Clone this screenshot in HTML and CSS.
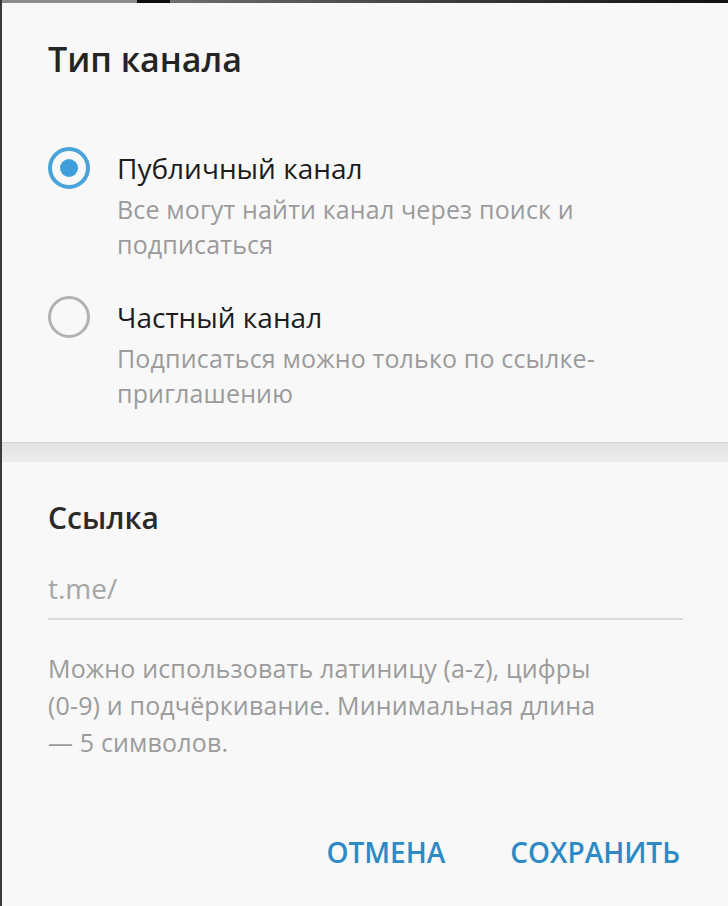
FILE: index.html
```html
<!DOCTYPE html>
<html lang="ru">
<head>
<meta charset="utf-8">
<link rel="stylesheet" href="styles.css">
</head>
<body>
<div class="topstrip"><span class="ts-a"></span><span class="ts-b"></span><span class="ts-c"></span></div>
<div class="dialog">
  <section class="type">
    <h1 class="title">Тип канала</h1>
    <div class="option first">
      <span class="radio checked"><span class="dot"></span></span>
      <div class="opt-text">
        <div class="opt-label">Публичный канал</div>
        <div class="opt-desc">Все могут найти канал через поиск и подписаться</div>
      </div>
    </div>
    <div class="option second">
      <span class="radio"></span>
      <div class="opt-text">
        <div class="opt-label">Частный канал</div>
        <div class="opt-desc">Подписаться можно только по ссылке-приглашению</div>
      </div>
    </div>
  </section>
  <div class="divider"></div>
  <section class="link">
    <h2 class="subtitle">Ссылка</h2>
    <div class="field"><span class="placeholder">t.me/</span></div>
    <p class="hint">Можно использовать латиницу (a-z), цифры <span class="nowrap">(0-9)</span> и подчёркивание. Минимальная длина <span class="nowrap">— 5</span> символов.</p>
    <div class="buttons">
      <span class="btn">ОТМЕНА</span>
      <span class="btn">СОХРАНИТЬ</span>
    </div>
  </section>
</div>
</body>
</html>
```
FILE: styles.css
```css
html, body {
  margin: 0;
  padding: 0;
  background: #f8f8f8;
  font-family: "Open Sans", "Noto Sans", sans-serif;
}
body {
  width: 728px;
  height: 906px;
  overflow: hidden;
  border-left: 2px solid #3a3a3a;
  box-sizing: border-box;
}
.topstrip {
  height: 3px;
  display: flex;
  background: #3c3c3c;
}
.ts-a { width: 135px; background: #8c8c8c; }
.ts-b { width: 33px; background: #0e0e0e; }
.ts-c { flex: 1; background: linear-gradient(90deg, #6e6e6e, #2a2a2a 70%, #111); }
.dialog {
  background: #f8f8f8;
}
.type {
  padding: 0 0 0 46px;
}
.title {
  margin: 0;
  padding-top: 36px;
  font-size: 34px;
  font-weight: 600;
  color: #242424;
  line-height: 40px;
}
.option {
  display: flex;
  align-items: flex-start;
  gap: 27px;
}
.option.first {
  margin-top: 71px;
}
.option.second {
  margin-top: 38px;
}
.radio {
  flex: none;
  width: 42px;
  height: 42px;
  box-sizing: border-box;
  border: 3px solid #b2b2b2;
  border-radius: 50%;
  display: flex;
  align-items: center;
  justify-content: center;
  margin-top: -3px;
}
.radio.checked {
  border: 4px solid #4aa3d8;
}
.dot {
  width: 18px;
  height: 18px;
  border-radius: 50%;
  background: #3f9fdc;
}
.opt-label {
  font-size: 28px;
  line-height: 36px;
  color: #1c1c1c;
}
.opt-desc {
  font-size: 25px;
  line-height: 34.5px;
  color: #9b9b9b;
  width: 500px;
  margin-top: 6px;
  letter-spacing: 0.15px;
}
.divider {
  margin-top: 32px;
  height: 19px;
  background: linear-gradient(180deg, #e3e3e3, #ececec);
  border-top: 1px solid #d2d2d2;
}
.link {
  padding: 0 44px 0 46px;
}
.subtitle {
  margin: 0;
  padding-top: 36px;
  font-size: 30px;
  font-weight: 600;
  color: #2a2a2a;
  line-height: 40px;
}
.field {
  margin-top: 32px;
  border-bottom: 2px solid #dadada;
  padding-bottom: 12px;
  width: 635px;
}
.placeholder {
  font-size: 28px;
  line-height: 36px;
  color: #a6a6a6;
}
.hint {
  margin: 30px 0 0;
  font-size: 25px;
  line-height: 37px;
  color: #9b9b9b;
  width: 600px;
  letter-spacing: 0.15px;
}
.nowrap {
  white-space: nowrap;
}
.buttons {
  display: flex;
  justify-content: flex-end;
  gap: 65px;
  margin-top: 73px;
  width: 632px;
}
.btn {
  font-size: 28px;
  font-weight: 600;
  color: #2d8ac4;
  line-height: 36px;
}
```
